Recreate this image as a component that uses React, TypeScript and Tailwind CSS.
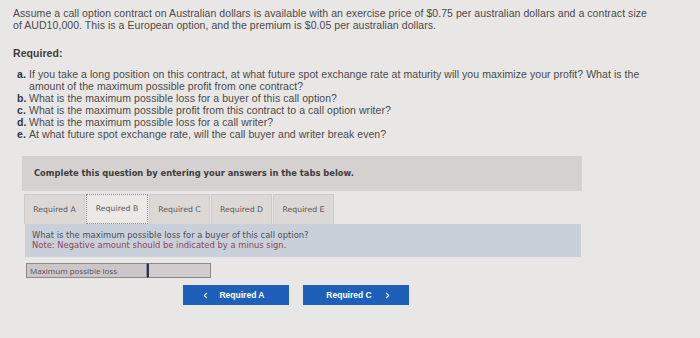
import { ChevronLeft, ChevronRight } from 'lucide-react';

const parts = [
  { letter: 'a.', lines: ['If you take a long position on this contract, at what future spot exchange rate at maturity will you maximize your profit? What is the', 'amount of the maximum possible profit from one contract?'] },
  { letter: 'b.', lines: ['What is the maximum possible loss for a buyer of this call option?'] },
  { letter: 'c.', lines: ['What is the maximum possible profit from this contract to a call option writer?'] },
  { letter: 'd.', lines: ['What is the maximum possible loss for a call writer?'] },
  { letter: 'e.', lines: ['At what future spot exchange rate, will the call buyer and writer break even?'] },
];

const tabs = ['Required A', 'Required B', 'Required C', 'Required D', 'Required E'];

export default function App() {
  return (
    <div className="w-[700px] h-[338px] bg-[#e9e7e5] overflow-hidden font-['Liberation_Sans',sans-serif] text-[#4b4a4a]">
      {/* question text */}
      <div className="pl-[13px] pt-[7px] text-[10.5px] leading-[12px] tracking-[0.06px]">
        <p>Assume a call option contract on Australian dollars is available with an exercise price of $0.75 per australian dollars and a contract size</p>
        <p>of AUD10,000. This is a European option, and the premium is $0.05 per australian dollars.</p>
        <p className="mt-[16px] font-bold text-[#3d3c3c]">Required:</p>
        <div className="mt-[9px] pl-[4px]">
          {parts.map(p => (
            <div key={p.letter} className="flex">
              <span className="w-[12px] shrink-0 font-bold text-[#2f3545]">{p.letter}</span>
              <div>
                {p.lines.map(l => (
                  <p key={l}>{l}</p>
                ))}
              </div>
            </div>
          ))}
        </div>
      </div>

      {/* instructions bar */}
      <div className="ml-[22px] mt-[16px] w-[560px] h-[35px] bg-[#d5d1d0] flex items-center pl-[12px] font-['DejaVu_Sans',sans-serif] font-bold text-[8.35px] text-[#3f3d3e]">
        Complete this question by entering your answers in the tabs below.
      </div>

      {/* tabs */}
      <div className="ml-[24px] mt-[3px] flex h-[30px] font-['DejaVu_Sans',sans-serif] text-[7.8px] text-[#5a5858]">
        {tabs.map((t, i) => (
          <div
            key={t}
            className={
              i === 1
                ? 'w-[62px] mr-[1px] flex items-center justify-center bg-[#ebe8e6] border border-dotted border-[#8a8888]'
                : 'w-[61px] mr-[1px] flex items-center justify-center bg-[#dcd8d6] border border-[#cfcbc9] border-b-0'
            }
          >
            {t}
          </div>
        ))}
      </div>

      {/* question panel */}
      <div className="ml-[25px] w-[556px] h-[33px] bg-[#c9d0da] pl-[7px] pt-[6px] font-['DejaVu_Sans',sans-serif] text-[8.4px] leading-[10px]">
        <p className="text-[#4c4d57]">What is the maximum possible loss for a buyer of this call option?</p>
        <p className="text-[#8c4656]">Note: Negative amount should be indicated by a minus sign.</p>
      </div>

      {/* answer row */}
      <div className="ml-[26px] mt-[6px] flex h-[15px] font-['Open_Sans',sans-serif] text-[8px] text-[#57535a]">
        <div className="w-[121px] bg-[#cbc6c8] border border-[#8e8a8b] flex items-center pl-[3px]">Maximum possible loss</div>
        <div className="w-[64px] bg-[#d1cdce] border border-[#8e8a8b] border-l-[2px] border-l-[#2a3550]" />
      </div>

      {/* navigation */}
      <div className="ml-[183px] mt-[7px] flex gap-[14px] font-['Liberation_Sans',sans-serif] font-bold text-[8.5px] text-white">
        <button className="w-[106px] h-[20px] bg-[#1e5fba] flex items-center justify-center gap-[9px] pr-[6px]">
          <ChevronLeft className="w-[9px] h-[9px]" strokeWidth={3} />
          Required A
        </button>
        <button className="w-[106px] h-[20px] bg-[#1e5fba] flex items-center justify-center gap-[11px] pl-[6px]">
          Required C
          <ChevronRight className="w-[9px] h-[9px]" strokeWidth={3} />
        </button>
      </div>
    </div>
  );
}
